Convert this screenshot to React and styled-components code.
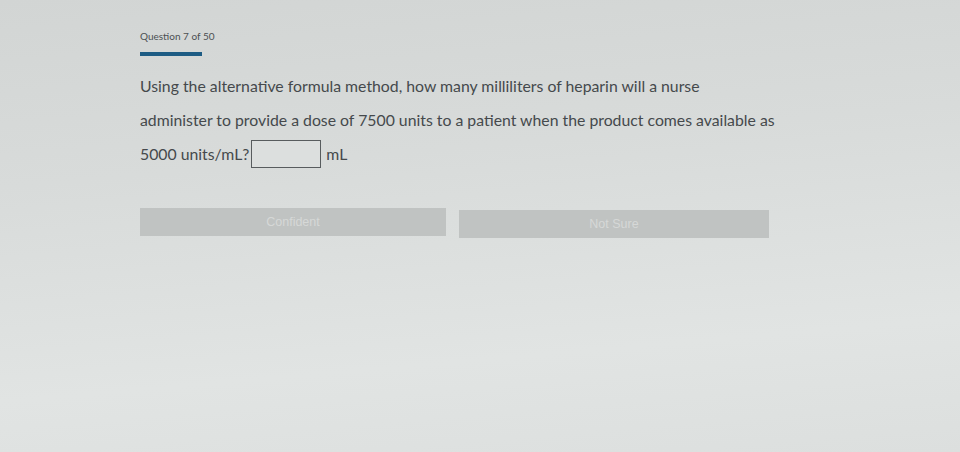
import React from "react";
import styled, { createGlobalStyle } from "styled-components";

const Global = createGlobalStyle`
  html, body { margin: 0; padding: 0; }
  body {
    width: 960px; height: 452px; overflow: hidden;
    background: linear-gradient(175deg, #d2d5d4 0%, #d8dbda 35%, #e1e4e3 75%, #dcdfde 100%);
    font-family: Lato, "Open Sans", sans-serif;
  }
`;

const Page = styled.div`
  padding: 30px 0 0 140px;
  width: 640px;
  display: flex;
  flex-direction: column;
`;

const Counter = styled.div`
  font-size: 10px;
  color: #4b5053;
  line-height: 12px;
`;

const Progress = styled.div`
  margin-top: 10px;
  width: 62px;
  height: 4px;
  background: #1d5c84;
`;

const Question = styled.div`
  margin-top: 13px;
  font-size: 15.8px;
  line-height: 34px;
  color: #45494c;
  white-space: nowrap;
`;

const Answer = styled.input`
  width: 70px;
  height: 28px;
  box-sizing: border-box;
  border: 1.5px solid #585c5e;
  background: #dcdfde;
  vertical-align: middle;
  margin: -4px 5px 0 2px;
  padding: 0 0 0 6px;
  font: inherit;
`;

const Buttons = styled.div`
  margin-top: 37px;
  display: flex;
  gap: 13px;
  align-items: flex-start;
`;

const Choice = styled.button`
  width: ${p => p.$w}px;
  height: 28px;
  margin-top: ${p => p.$top}px;
  border: none;
  background: #c0c3c2;
  color: #d6d8d7;
  font-family: "Liberation Sans", Arial, sans-serif;
  font-size: 12.5px;
  padding: 0;
`;

export default function App() {
  return (
    <>
      <Global />
      <Page>
        <Counter>Question 7 of 50</Counter>
        <Progress />
        <Question>
          Using the alternative formula method, how many milliliters of heparin will a nurse
          <br />
          administer to provide a dose of 7500 units to a patient when the product comes available as
          <br />
          5000 units/mL?<Answer type="text" aria-label="answer" />mL
        </Question>
        <Buttons>
          <Choice $w={306} $top={0}>Confident</Choice>
          <Choice $w={310} $top={2}>Not Sure</Choice>
        </Buttons>
      </Page>
    </>
  );
}
